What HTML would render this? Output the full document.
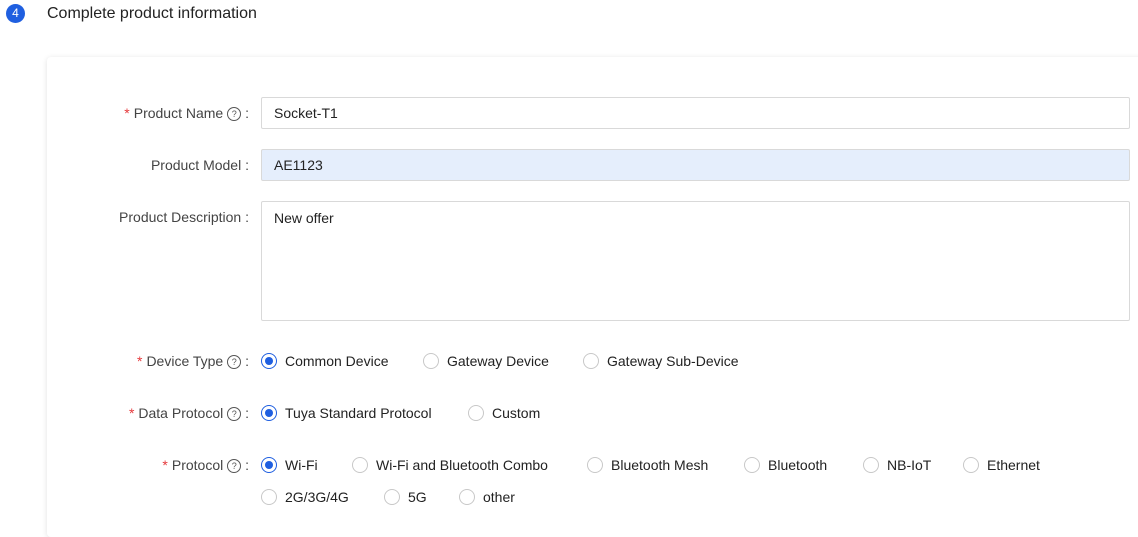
<!DOCTYPE html>
<html><head><meta charset="utf-8"><style>
body{margin:0;width:1138px;height:506px;overflow:hidden;background:#fff;font-family:"Liberation Sans",Helvetica,Arial,sans-serif;color:#222;position:relative}
.badge{position:absolute;left:6px;top:4px;width:19px;height:19px;border-radius:50%;background:#1f5fe0;color:#fff;font-size:12px;text-align:center;line-height:19px}
.title{position:absolute;left:47px;top:5px;font-size:16px;color:#222}
.card{position:absolute;left:47px;top:57px;width:1120px;height:480px;background:#fff;border-radius:4px;box-shadow:0 1px 6px rgba(0,0,0,.12)}
.lab{position:absolute;right:889px;font-size:14px;color:#444;white-space:nowrap}
.lab .s{color:#e5383b;margin-right:4px}
.q{display:inline-block;width:12px;height:12px;border:1px solid #555;border-radius:50%;font-size:9px;line-height:12px;text-align:center;margin-left:4px;vertical-align:1px;color:#555}
.inp{position:absolute;left:261px;width:869px;border:1px solid #d9d9d9;border-radius:2px;font-size:14px;color:#222;box-sizing:border-box;padding:0 12px}
.r{position:absolute;font-size:14px;color:#222;white-space:nowrap}
.r i{position:absolute;left:0;top:0;width:16px;height:16px;box-sizing:border-box;border:1px solid #c8c8c8;border-radius:50%}
.r.on i{border-color:#1f5fe0}
.r.on i:after{content:"";position:absolute;left:3px;top:3px;width:8px;height:8px;border-radius:50%;background:#1f5fe0}
.r span{position:absolute;left:24px;top:0px}
</style></head><body>
<div class="badge">4</div><div class="title">Complete product information</div>
<div class="card"></div>
<div class="lab" style="top:105px"><span class="s">*</span>Product Name<span class="q">?</span> :</div>
<div class="inp" style="top:97px;height:32px;line-height:30px">Socket-T1</div>
<div class="lab" style="top:157px">Product Model :</div>
<div class="inp" style="top:149px;height:32px;line-height:30px;background:#e5eefc">AE1123</div>
<div class="lab" style="top:209px">Product Description :</div>
<div class="inp" style="top:201px;height:120px;padding-top:8px">New offer</div>
<div class="lab" style="top:353px"><span class="s">*</span>Device Type<span class="q">?</span> :</div>
<div class="r on" style="left:261px;top:353px"><i></i><span>Common Device</span></div>
<div class="r" style="left:423px;top:353px"><i></i><span>Gateway Device</span></div>
<div class="r" style="left:583px;top:353px"><i></i><span>Gateway Sub-Device</span></div>
<div class="lab" style="top:405px"><span class="s">*</span>Data Protocol<span class="q">?</span> :</div>
<div class="r on" style="left:261px;top:405px"><i></i><span>Tuya Standard Protocol</span></div>
<div class="r" style="left:468px;top:405px"><i></i><span>Custom</span></div>
<div class="lab" style="top:457px"><span class="s">*</span>Protocol<span class="q">?</span> :</div>
<div class="r on" style="left:261px;top:457px"><i></i><span>Wi-Fi</span></div>
<div class="r" style="left:352px;top:457px"><i></i><span>Wi-Fi and Bluetooth Combo</span></div>
<div class="r" style="left:587px;top:457px"><i></i><span>Bluetooth Mesh</span></div>
<div class="r" style="left:744px;top:457px"><i></i><span>Bluetooth</span></div>
<div class="r" style="left:863px;top:457px"><i></i><span>NB-IoT</span></div>
<div class="r" style="left:963px;top:457px"><i></i><span>Ethernet</span></div>
<div class="r" style="left:261px;top:489px"><i></i><span>2G/3G/4G</span></div>
<div class="r" style="left:384px;top:489px"><i></i><span>5G</span></div>
<div class="r" style="left:459px;top:489px"><i></i><span>other</span></div>
</body></html>
